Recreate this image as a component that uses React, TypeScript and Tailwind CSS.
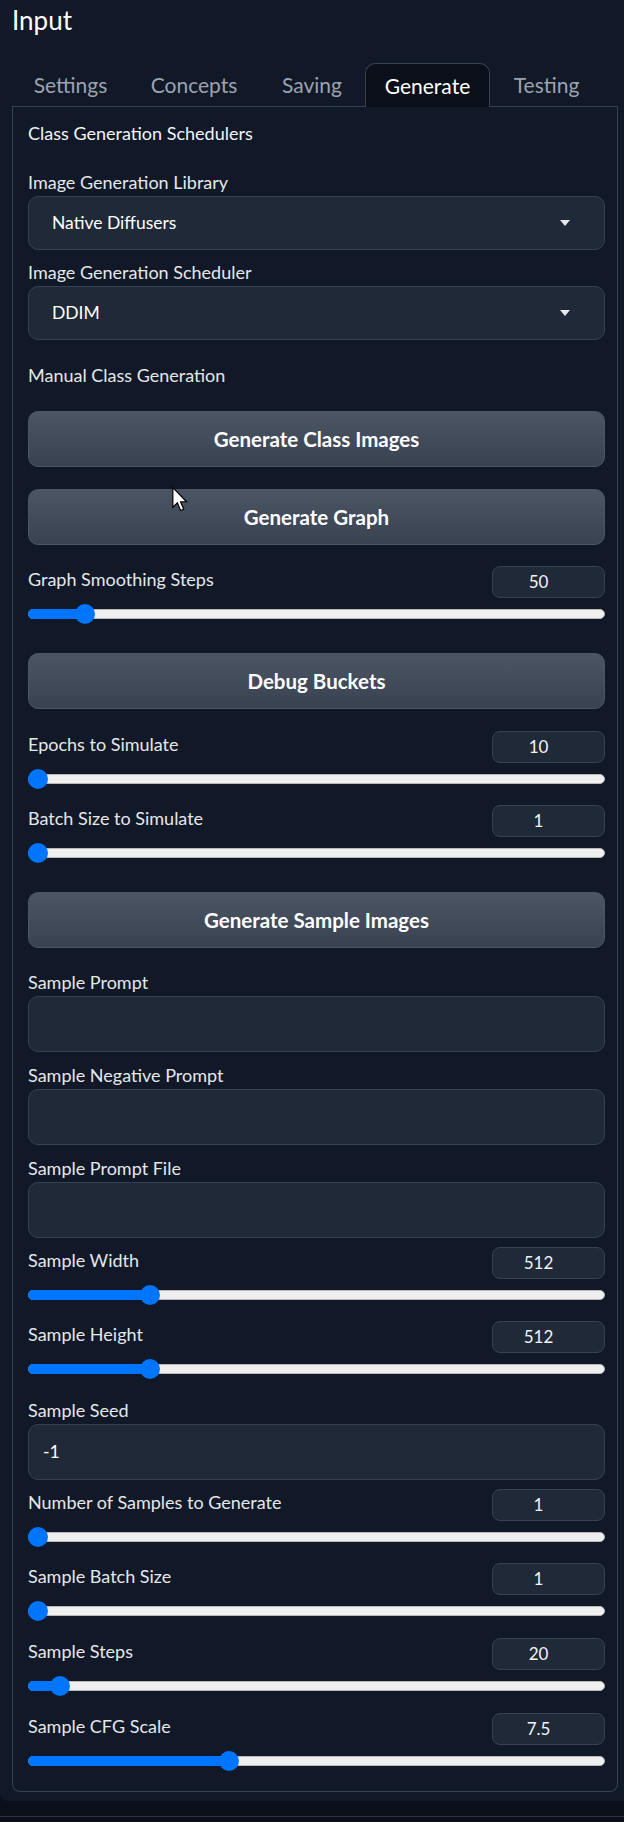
import type { ReactNode } from "react";

const LABEL = "text-[18px] leading-[20px] text-[#e5e7eb]";

type SliderRow = { label: string; value: string; frac: number; className: string };

function SliderField({ label, value, frac, className }: SliderRow) {
  // track is 577px wide, thumb 20px, so the thumb travels 557px
  const travel = 557;
  return (
    <div className={className}>
      <div className="flex h-[32px] items-center justify-between">
        <span className={`${LABEL} pb-[6px]`}>{label}</span>
        <div className="flex h-[32px] w-[113px] items-center justify-center rounded-[8px] border border-[#374151] bg-[#1f2937] pr-[20px] text-[17px] text-[#f3f4f6]">
          {value}
        </div>
      </div>
      <div className="relative mt-[6px] h-[20px]">
        <div className="absolute left-0 right-0 top-[5px] h-[10px] rounded-full border border-[#b8b8b8] bg-[#efefef]" />
        <div
          className="absolute left-0 top-[5px] h-[10px] rounded-full bg-[#0075ff]"
          style={{ width: 10 + frac * travel }}
        />
        <div
          className="absolute top-0 h-[20px] w-[20px] rounded-full bg-[#0075ff]"
          style={{ left: frac * travel }}
        />
      </div>
    </div>
  );
}

function Dropdown({ label, value, className }: { label: string; value: string; className: string }) {
  return (
    <div className={className}>
      <div className={`${LABEL} mb-[4px]`}>{label}</div>
      <div className="flex h-[54px] items-center justify-between rounded-[10px] border border-[#374151] bg-[#1f2937] pl-[23px] pr-[34px] text-[17.5px] text-white">
        <span>{value}</span>
        <svg width="10" height="6" viewBox="0 0 10 6">
          <path d="M0 0h10L5 6z" fill="#e5e7eb" />
        </svg>
      </div>
    </div>
  );
}

function TextField({ label, value, className }: { label: string; value?: string; className: string }) {
  return (
    <div className={className}>
      <div className={`${LABEL} mb-[4px]`}>{label}</div>
      <div className="flex h-[56px] items-center rounded-[10px] border border-[#374151] bg-[#1f2937] pl-[14px] text-[17.5px] text-white">
        {value}
      </div>
    </div>
  );
}

function ActionButton({ children, className }: { children: ReactNode; className: string }) {
  return (
    <button
      type="button"
      className={`flex h-[56px] w-full items-center justify-center rounded-[10px] border border-[#4b5563] bg-gradient-to-b from-[#4b5563] to-[#3a4252] text-[20.5px] font-bold text-white ${className}`}
    >
      {children}
    </button>
  );
}

const tabs = [
  { name: "Settings", width: "w-[117px]" },
  { name: "Concepts", width: "w-[130px]" },
  { name: "Saving", width: "w-[106px]" },
  { name: "Generate", width: "w-[125px]", active: true },
  { name: "Testing", width: "w-[113px]" },
];

export default function App() {
  return (
    <div className="relative min-h-screen bg-[#0b0f19] font-['Lato',sans-serif]">
      <div className="rounded-bl-[8px] bg-[#111827] pb-[9px]">
        <div className="h-[63px] pl-[12px] pt-[4px] text-[26px] leading-[32px] text-white">Input</div>

        <div className="ml-[12px] flex h-[44px] w-[606px]">
          {tabs.map((tab) =>
            tab.active ? (
              <div
                key={tab.name}
                className={`${tab.width} flex items-center justify-center rounded-t-[10px] border border-b-0 border-[#374151] bg-[#0b0f19] text-[21px] text-white`}
              >
                {tab.name}
              </div>
            ) : (
              <div
                key={tab.name}
                className={`${tab.width} flex items-center justify-center border-b border-[#374151] text-[21px] text-[#9ca3af]`}
              >
                {tab.name}
              </div>
            )
          )}
          <div className="flex-1 border-b border-[#374151]" />
        </div>

        <div className="ml-[12px] w-[606px] rounded-b-[8px] border border-t-0 border-[#374151] pb-[20px] pl-[15px] pr-[12px] pt-[16px]">
          <div className="text-[18px] leading-[20px] text-[#f3f4f6]">Class Generation Schedulers</div>
          <Dropdown className="mt-[29px]" label="Image Generation Library" value="Native Diffusers" />
          <Dropdown className="mt-[12px]" label="Image Generation Scheduler" value="DDIM" />
          <div className={`${LABEL} mt-[25px]`}>Manual Class Generation</div>

          <ActionButton className="mt-[26px]">Generate Class Images</ActionButton>
          <ActionButton className="mt-[22px]">Generate Graph</ActionButton>
          <SliderField className="mt-[21px]" label="Graph Smoothing Steps" value="50" frac={0.084} />

          <ActionButton className="mt-[29px]">Debug Buckets</ActionButton>
          <SliderField className="mt-[22px]" label="Epochs to Simulate" value="10" frac={0} />
          <SliderField className="mt-[16px]" label="Batch Size to Simulate" value="1" frac={0} />

          <ActionButton className="mt-[29px]">Generate Sample Images</ActionButton>
          <TextField className="mt-[24px]" label="Sample Prompt" />
          <TextField className="mt-[13px]" label="Sample Negative Prompt" />
          <TextField className="mt-[13px]" label="Sample Prompt File" />
          <SliderField className="mt-[9px]" label="Sample Width" value="512" frac={0.201} />
          <SliderField className="mt-[16px]" label="Sample Height" value="512" frac={0.201} />
          <TextField className="mt-[21px]" label="Sample Seed" value="-1" />
          <SliderField className="mt-[9px]" label="Number of Samples to Generate" value="1" frac={0} />
          <SliderField className="mt-[16px]" label="Sample Batch Size" value="1" frac={0} />
          <SliderField className="mt-[17px]" label="Sample Steps" value="20" frac={0.039} />
          <SliderField className="mt-[17px]" label="Sample CFG Scale" value="7.5" frac={0.343} />
        </div>
      </div>

      <div className="h-[15px]" />
      <div className="h-[5px] border-t border-[#2b3240]" />

      <svg
        className="absolute left-[172px] top-[487px]"
        width="16"
        height="25"
        viewBox="0 0 13 21"
      >
        <path d="M0.5 0.5 L0.5 17 L4.3 13.3 L7 19.8 L9.6 18.7 L7 12.4 L12 12.4 Z" fill="#ffffff" stroke="#000000" strokeWidth="1" />
      </svg>
    </div>
  );
}
